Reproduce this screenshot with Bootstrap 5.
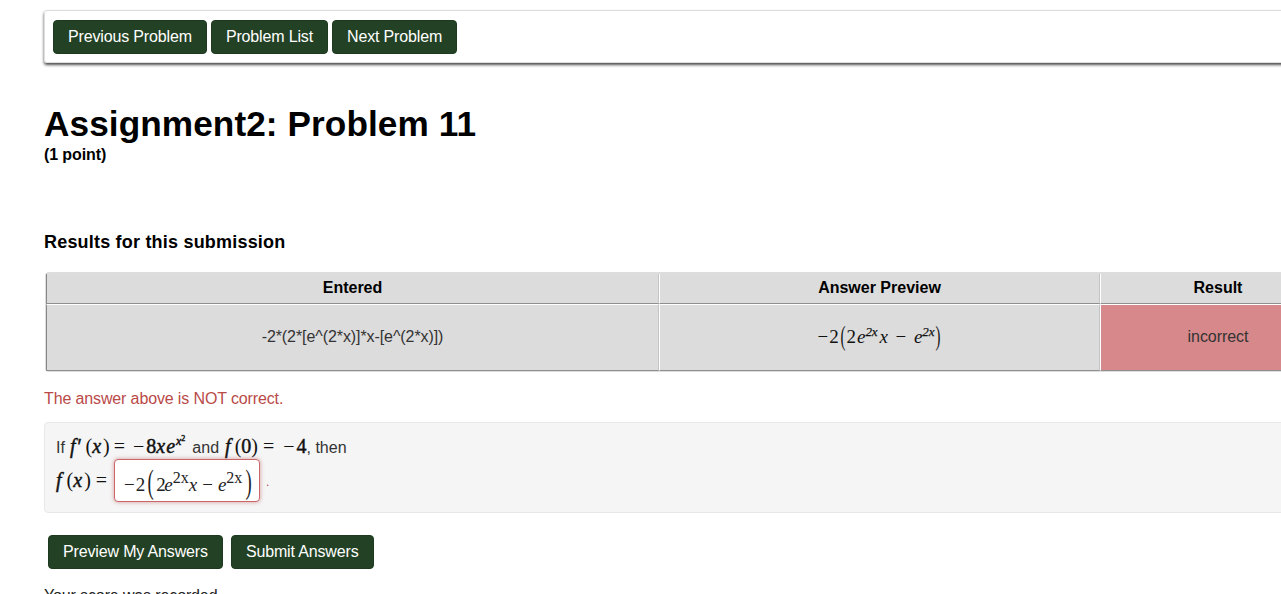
<!DOCTYPE html>
<html lang="en">
<head>
<meta charset="utf-8">
<title>Assignment2: Problem 11</title>
<link href="https://cdn.jsdelivr.net/npm/bootstrap@5.3.0/dist/css/bootstrap.min.css" rel="stylesheet">
<style>
html, body { overflow: hidden; height: 594px; }
body { font-family: "Liberation Sans", Arial, sans-serif; font-size: 16px; color: #000; background: #fff; line-height: 20px; }
.sheet { width: 1292px; margin-left: 44px; padding-top: 10px; }
.toolbar { border: 1px solid #ddd; border-radius: 3px; box-shadow: 0 2px 3px 0 rgba(0,0,0,.7); padding: 9px 8px; height: 53px; display: flex; gap: 4px; }
.wbtn { background: #234225; border: 1px solid #1d3a20; color: #fff; border-radius: 4px; font-size: 16px; line-height: 20px; padding: 6px 14px; height: 34px; letter-spacing: -.15px; }
.wbtn:hover { background: #234225; color: #fff; }
.ptitle { font-size: 35.2px; line-height: 40px; font-weight: 700; margin: 41px 0 0; letter-spacing: .08px; }
.ppoint { font-size: 16px; font-weight: 700; line-height: 20px; margin: 1px 0 0; letter-spacing: -.1px; }
.rtitle { font-size: 18px; font-weight: 700; line-height: 20px; margin: 67px 0 0; letter-spacing: .2px; }
.rtable { width: 1291px; margin: 20px 0 0 1px; border-collapse: separate; border-spacing: 0; table-layout: fixed; border-top: 2px solid #ddd; border-bottom: 1px solid #ddd; border-left: 1px solid #ddd; border-radius: 4px; }
.rtable th, .rtable td { background: #dcdcdc; text-align: center; vertical-align: middle; padding: 0; border-right: 1px solid #c4c4c4; border-left: 1px solid #fff; }
.rtable th:first-child, .rtable td:first-child { border-left: 1px solid #888; }
.rtable th { height: 30px; font-weight: 700; border-bottom: 1px solid #8f8f8f; color: #000; padding-bottom: 2px; }
.rtable td { height: 67px; color: #333; letter-spacing: -.08px; border-top: 1px solid #fff; border-bottom: 1px solid #8f8f8f; padding-bottom: 2px; }
.rtable td.bad { background: #d6888b; letter-spacing: -.05px; }
.errline { color: #b94a48; margin: 17px 0 0; line-height: 20px; letter-spacing: -.13px; }
.pbox { background: #f5f5f5; border: 1px solid #e8e8e8; border-radius: 4px; height: 91px; padding: 13px 11px 0; color: #333; margin-top: 13px; }
.m { font-family: "Liberation Serif", "DejaVu Serif", serif; color: #111; white-space: nowrap; display: inline-flex; align-items: baseline; }
.m span { display: inline-block; }
.big { font-size: 20px; -webkit-text-stroke: .45px #111; }
.thin { -webkit-text-stroke: 0; }
.big .up { font-size: 12px; position: relative; top: -8px; }
.big .up2 { font-size: 8px; position: relative; top: -12px; }
.big .prm { font-size: 20px; position: relative; width: 5px; font-family: "Liberation Sans", sans-serif; }
.pline { height: 21px; line-height: 21px; display: flex; align-items: baseline; }
.pline2 { margin-top: 1px; display: flex; align-items: center; height: 44px; }
.ansbox { display: inline-flex; align-items: baseline; justify-content: flex-start; width: 146px; height: 43px; line-height: 40px; padding-left: 9px; margin-left: 7px; background: #fff; border: 1px solid #c9686c; border-radius: 4px; box-shadow: 0 0 4px rgba(185,74,72,.55); font-family: "Liberation Serif", serif; font-size: 19px; color: #222; white-space: nowrap; }
.ansbox .up { font-size: 16px; position: relative; top: -8px; }
.ansbox .tight { letter-spacing: -1.5px; }
.par { transform: scale(.55, 1); transform-origin: center; display: inline-block; }
.ansbox .par { font-size: 34px; font-weight: 400; position: relative; top: 2px; width: 7px; text-align: center; }
.prev { font-size: 19px; display: inline-flex; }
.prev .up { font-size: 13px; position: relative; top: -7px; -webkit-text-stroke: .25px #111; }
.prev .par { font-size: 27px; width: 7px; position: relative; top: 2px; }
.actions { display: flex; gap: 8px; margin: 22px 0 0 4px; }
.recorded { margin: 17px 0 0; color: #222; letter-spacing: -.13px; }
.dot { margin-left: 6px; font-size: 12px; color: #b94a48; position: relative; top: 2px; }
.g1 { margin-left: 1px; } .g2 { margin-left: 2px; } .g3 { margin-left: 3px; } .g4 { margin-left: 4px; }
.g5 { margin-left: 5px; } .g6 { margin-left: 6px; } .g7 { margin-left: 7px; } .g8 { margin-left: 8px; } .g9 { margin-left: 9px; }
</style>
</head>
<body>
<div class="sheet">
  <div class="toolbar">
    <a class="btn wbtn" href="#">Previous Problem</a>
    <a class="btn wbtn" href="#">Problem List</a>
    <a class="btn wbtn" href="#">Next Problem</a>
  </div>
  <h1 class="ptitle">Assignment2: Problem 11</h1>
  <p class="ppoint">(1 point)</p>
  <h2 class="rtitle">Results for this submission</h2>
  <table class="rtable">
    <colgroup><col style="width:613px"><col style="width:441px"><col></colgroup>
    <tr><th>Entered</th><th>Answer Preview</th><th>Result</th></tr>
    <tr>
      <td>-2*(2*[e^(2*x)]*x-[e^(2*x)])</td>
      <td><span class="m prev"><span>−</span><span class="g1">2</span><span class="par">(</span><span class="g1">2</span><i class="g1">e</i><span class="up"><i>2x</i></span><i class="g2">x</i><span class="g4">&thinsp;−&thinsp;</span><i class="g4">e</i><span class="up"><i>2x</i></span><span class="par">)</span></span></td>
      <td class="bad">incorrect</td>
    </tr>
  </table>
  <p class="errline">The answer above is NOT correct.</p>
  <div class="pbox">
    <div class="pline">
      <span>If</span>
      <span class="m big g5"><i>f</i><span class="prm g2">′</span><span class="g3 thin">(</span><i>x</i><span class="g2 thin">)</span><span class="g4 thin">=</span><span class="g8 thin">−</span><span class="g2">8</span><i>x</i><i class="g1">e</i><span class="up g1"><i>x</i></span><span class="up2">2</span></span>
      <span class="g7">and</span>
      <span class="m big g6"><i>f</i><span class="g4 thin">(</span><span>0</span><span class="thin">)</span><span class="g5 thin">=</span><span class="g9 thin">−</span><span class="g2">4</span></span><span>, then</span>
    </div>
    <div class="pline2">
      <span class="m big"><i>f</i><span class="g5 thin">(</span><i>x</i><span class="g2 thin">)</span><span class="g5 thin">=</span></span>
      <span class="ansbox"><span>−</span><span class="g1">2</span><span class="par g1">(</span><span class="g3 tight">2</span><i>e</i><span class="up">2x</span><i>x</i><span class="g5">−</span><i class="g5">e</i><span class="up">2x</span><span class="par g2">)</span></span>
      <span class="dot">.</span>
    </div>
  </div>
  <div class="actions">
    <button class="btn wbtn" type="button">Preview My Answers</button>
    <button class="btn wbtn" type="button">Submit Answers</button>
  </div>
  <p class="recorded">Your score was recorded.</p>
</div>
<script src="https://cdn.jsdelivr.net/npm/bootstrap@5.3.0/dist/js/bootstrap.bundle.min.js"></script>
</body>
</html>
